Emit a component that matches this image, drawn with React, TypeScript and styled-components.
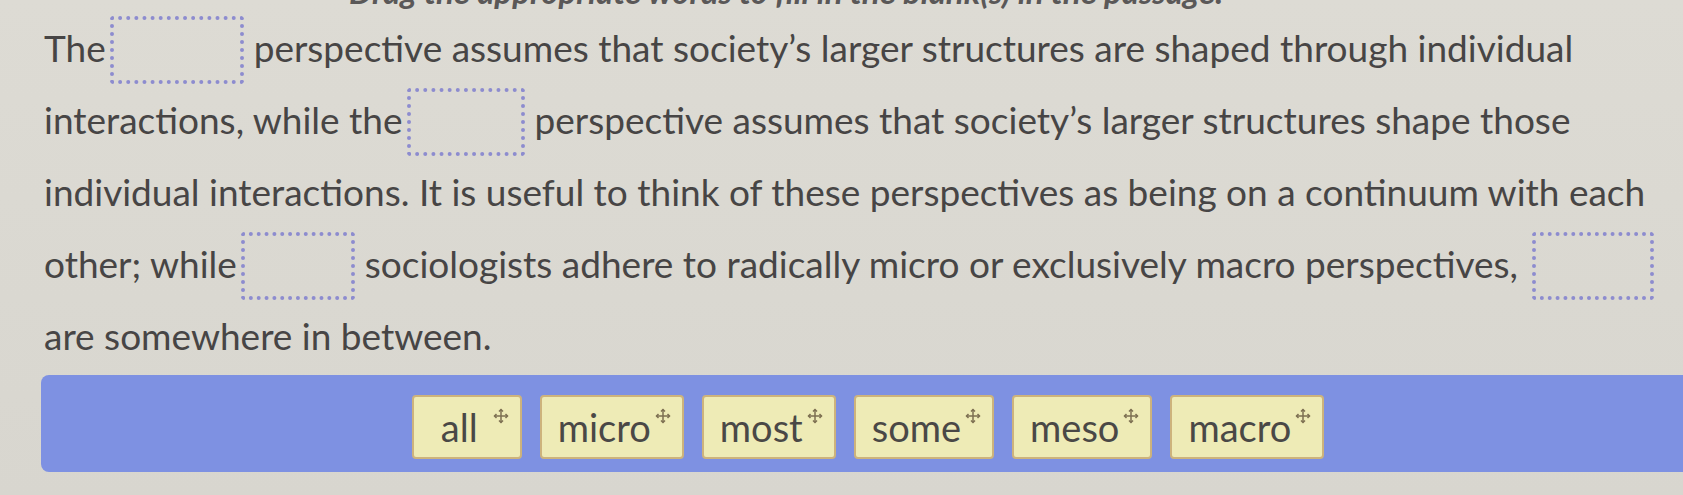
import React from "react";
import styled, { createGlobalStyle } from "styled-components";

const GlobalStyle = createGlobalStyle`
  html, body {
    margin: 0;
    padding: 0;
    background: #dad8d1;
  }
  body {
    font-family: Lato, "Open Sans", sans-serif;
    overflow: hidden;
  }
`;

const Page = styled.div`
  width: 1683px;
  height: 495px;
  overflow: hidden;
  background: linear-gradient(180deg, #dddbd4 0%, #d8d6cf 100%);
  color: #474545;
`;

const Heading = styled.div`
  display: flex;
  justify-content: flex-end;
  padding-right: 460px;
  margin-top: -24px;
  height: 20px;
  font-size: 33px;
  font-weight: 700;
  font-style: italic;
  color: #5a5858;
  line-height: 30px;
  white-space: nowrap;
`;

const Passage = styled.div`
  padding: 0 10px 0 44px;
  font-size: 37px;
  line-height: 72px;
  margin-top: 16px;
  white-space: nowrap;
`;

const Blank = styled.span<{ $w: number; $ml?: number }>`
  display: inline-block;
  width: ${(p) => p.$w}px;
  height: 68px;
  vertical-align: middle;
  margin: -6px 10px 0 ${(p) => p.$ml ?? 4}px;
  box-sizing: border-box;
  border: 4px dotted #8d8ccf;
  border-radius: 4px;
`;

const Bank = styled.div`
  margin: 3px -12px 0 41px;
  height: 97px;
  background: #7e91e2;
  border-radius: 8px;
  display: flex;
  align-items: center;
  justify-content: center;
  gap: 18px;
  padding-top: 6px;
  box-sizing: border-box;
`;

const Chip = styled.div`
  position: relative;
  display: flex;
  align-items: center;
  justify-content: center;
  min-width: 110px;
  height: 64px;
  padding: 0 31px 0 16px;
  box-sizing: border-box;
  background: #eeebb6;
  border: 2px solid #cdb37c;
  border-radius: 4px;
  font-size: 38px;
  color: #4a4846;
`;

const MoveMark = styled.svg`
  position: absolute;
  top: 11px;
  right: 11px;
  width: 16px;
  height: 16px;
`;

function MoveIcon() {
  return (
    <MoveMark viewBox="0 0 16 16" fill="none" stroke="#7d7052" strokeWidth="1.5">
      <path d="M8 1.5v13M1.5 8h13" />
      <path d="M6 3.5 8 1.5l2 2M6 12.5l2 2 2-2M3.5 6 1.5 8l2 2M12.5 6l2 2-2 2" />
    </MoveMark>
  );
}

const words = ["all", "micro", "most", "some", "meso", "macro"];

export default function App() {
  return (
    <Page>
      <GlobalStyle />
      <Heading>Drag the appropriate words to fill in the blank(s) in the passage.</Heading>
      <Passage>
        The<Blank $w={134} />perspective assumes that society’s larger structures are shaped through individual
        <br />
        interactions, while the<Blank $w={118} />perspective assumes that society’s larger structures shape those
        <br />
        individual interactions. It is useful to think of these perspectives as being on a continuum with each
        <br />
        other; while<Blank $w={114} />sociologists adhere to radically micro or exclusively macro perspectives,
        <Blank $w={122} $ml={14} />
        <br />
        are somewhere in between.
      </Passage>
      <Bank>
        {words.map((w) => (
          <Chip key={w}>
            {w}
            <MoveIcon />
          </Chip>
        ))}
      </Bank>
    </Page>
  );
}
